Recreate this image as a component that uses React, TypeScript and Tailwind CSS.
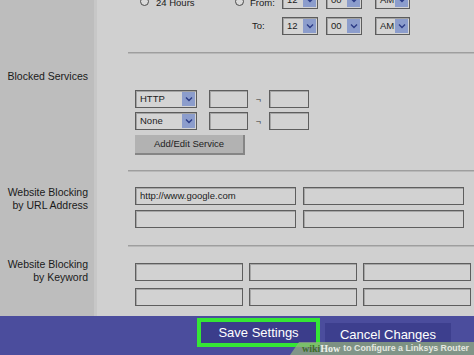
import React from "react";

const F = "font-['Liberation_Sans',Arial,Helvetica,sans-serif]";

function Chevron() {
  return (
    <svg width="8" height="6" viewBox="0 0 8 6" fill="none">
      <polyline points="1,1.5 4,4.5 7,1.5" stroke="#2c3c86" strokeWidth="1.4" />
    </svg>
  );
}

function Select({ className, value }: { className: string; value: string }) {
  return (
    <div
      className={`flex h-[18px] items-center justify-between border border-[#5c5c5c] bg-[#d4d4d4] pl-[4px] pr-[1px] shadow-[inset_1px_1px_0_#a3a3a3] ${className}`}
    >
      <span className="text-[9.5px] leading-none text-[#1c1c1c]">{value}</span>
      <div className="flex h-[14px] w-[13px] items-center justify-center bg-[#8c9dcc]">
        <Chevron />
      </div>
    </div>
  );
}

function Box({ className, value }: { className: string; value?: string }) {
  return (
    <div
      className={`flex h-[18px] items-center border border-[#5e5e5e] bg-[#d2d2d2] pl-[4px] shadow-[inset_1px_1px_0_#a6a6a6] ${className}`}
    >
      {value ? <span className="text-[9.5px] leading-none text-[#1c1c1c]">{value}</span> : null}
    </div>
  );
}

function Radio() {
  return <div className="h-[9px] w-[9px] shrink-0 rounded-full border border-[#4a4a4a] bg-[#dadada]" />;
}

function Sep() {
  return <div className="ml-[31px] h-[2px] border-t border-[#9e9e9e] bg-[#b8b8b8]" />;
}

function Left({ children, className }: { children?: React.ReactNode; className?: string }) {
  return (
    <div
      className={`w-[97px] shrink-0 border-r-[3px] border-[#c7c7c7] bg-[#bdbdbd] pr-[6px] text-right text-[10.5px] leading-[13px] text-[#1a1a1a] ${className ?? ""}`}
    >
      {children}
    </div>
  );
}

export default function App() {
  return (
    <div className={`relative h-[355px] w-[474px] overflow-hidden bg-[#d0d0d0] ${F}`}>
      {/* Section 1: time */}
      <div className="-mt-[10px] flex">
        <Left />
        <div className="flex flex-1 flex-col bg-[#d0d0d0] pt-[1px]">
          <div className="flex h-[18px] items-center pl-[43px]">
            <div className="pt-[2px]">
              <Radio />
            </div>
            <span className="ml-[7px] w-[79px] pt-[6px] text-[9.5px] leading-none text-[#1a1a1a]">24 Hours</span>
            <div className="pt-[2px]">
              <Radio />
            </div>
            <span className="ml-[6px] w-[32px] pt-[5px] text-[9.5px] leading-none text-[#1a1a1a]">From:</span>
            <Select className="w-[36px]" value="12" />
            <Select className="ml-[8px] w-[36px]" value="00" />
            <Select className="ml-[13px] w-[35px]" value="AM" />
          </div>
          <div className="mt-[8px] flex h-[18px] items-center pl-[155px]">
            <span className="w-[30px] text-[9.5px] leading-none text-[#1a1a1a]">To:</span>
            <Select className="w-[36px]" value="12" />
            <Select className="ml-[8px] w-[36px]" value="00" />
            <Select className="ml-[13px] w-[35px]" value="AM" />
          </div>
          <div className="mt-[17px]">
            <Sep />
          </div>
        </div>
      </div>

      {/* Section 2: blocked services */}
      <div className="flex">
        <Left className="pt-[16px]">Blocked Services</Left>
        <div className="flex flex-1 flex-col pt-[36px]">
          <div className="flex items-center pl-[38px]">
            <Select className="w-[62px]" value="HTTP" />
            <Box className="ml-[12px] w-[39px]" />
            <span className="w-[21px] pt-[2px] text-center text-[9px] leading-none text-[#333]">¬</span>
            <Box className="w-[40px]" />
          </div>
          <div className="mt-[4px] flex items-center pl-[38px]">
            <Select className="w-[62px]" value="None" />
            <Box className="ml-[12px] w-[39px]" />
            <span className="w-[21px] pt-[2px] text-center text-[9px] leading-none text-[#333]">¬</span>
            <Box className="w-[40px]" />
          </div>
          <div className="mt-[5px] pl-[38px]">
            <div className="flex h-[20px] w-[110px] items-center justify-center border-b-2 border-r-2 border-[#858585] bg-[#b2b2b2] text-[9.5px] text-[#222]">
              Add/Edit Service
            </div>
          </div>
          <div className="mt-[15px]">
            <Sep />
          </div>
        </div>
      </div>

      {/* Section 3: URL */}
      <div className="flex">
        <Left className="pt-[14px]">
          Website Blocking
          <br />
          by URL Address
        </Left>
        <div className="flex flex-1 flex-col pt-[15px]">
          <div className="flex gap-[7px] pl-[38px]">
            <Box className="w-[161px]" value="http://www.google.com" />
            <Box className="w-[161px]" />
          </div>
          <div className="mt-[5px] flex gap-[7px] pl-[38px]">
            <Box className="w-[161px]" />
            <Box className="w-[161px]" />
          </div>
          <div className="mt-[17px]">
            <Sep />
          </div>
        </div>
      </div>

      {/* Section 4: keyword */}
      <div className="flex h-[69px]">
        <Left className="pt-[11px] leading-[12px]">
          Website Blocking
          <br />
          by Keyword
        </Left>
        <div className="flex flex-1 flex-col pt-[16px]">
          <div className="flex gap-[6px] pl-[38px]">
            <Box className="w-[108px]" />
            <Box className="w-[108px]" />
            <Box className="w-[108px]" />
          </div>
          <div className="mt-[7px] flex gap-[6px] pl-[38px]">
            <Box className="w-[108px]" />
            <Box className="w-[108px]" />
            <Box className="w-[108px]" />
          </div>
        </div>
      </div>

      {/* Bottom bar */}
      <div className="flex h-[39px] items-start bg-[#4b4d9d] pl-[197px] pt-[2px]">
        <div className="flex h-[29px] w-[123px] items-center justify-center border-[4px] border-[#35e635] bg-[#3b3d8b] text-[13px] text-white">
          Save Settings
        </div>
        <div className="ml-[5px] mt-[5px] flex h-[24px] w-[126px] items-center justify-center bg-[#3d3f8e] text-[13px] text-white">
          Cancel Changes
        </div>
      </div>

      {/* wikiHow watermark */}
      <div className="absolute bottom-0 right-0 flex h-[13px] w-[184px] items-center bg-[rgba(150,178,128,0.72)] pl-[12px] [clip-path:polygon(9px_0,100%_0,100%_100%,0_100%)]">
        <span className="font-['Liberation_Serif',serif] text-[10px] font-bold leading-none text-[#3d6e2a]">wiki</span>
        <span className="font-['Liberation_Serif',serif] text-[10px] font-bold leading-none text-[#eef0ea]">How</span>
        <span className="ml-[3px] text-[8.8px] font-bold leading-none text-[#e4e8e0]">to Configure a Linksys Router</span>
      </div>
    </div>
  );
}
